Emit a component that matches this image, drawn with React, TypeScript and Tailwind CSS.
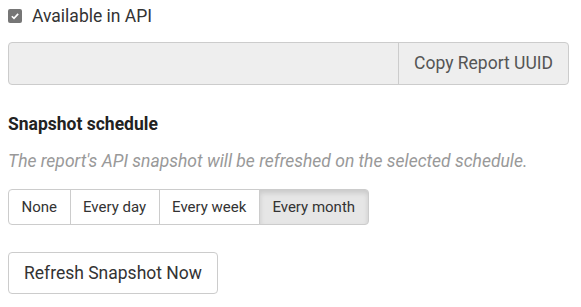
import { useState } from 'react';

const options = ['None', 'Every day', 'Every week', 'Every month'];

export default function App() {
  const [available, setAvailable] = useState(true);
  const [schedule, setSchedule] = useState('Every month');

  return (
    <div className="min-h-screen bg-white px-2 pt-[7px] text-[#333] font-['Roboto',sans-serif]">
      {/* API toggle */}
      <label className="flex h-[18px] items-center gap-[10px] text-[17.5px]">
        <button
          type="button"
          onClick={() => setAvailable(!available)}
          className="flex h-[14px] w-[14px] items-center justify-center rounded-[2px] bg-[#767676]"
        >
          {available && (
            <svg viewBox="0 0 12 12" className="h-[10px] w-[10px]">
              <path d="M2.2 6.3 L4.8 8.8 L9.8 3.4" fill="none" stroke="white" strokeWidth="2" />
            </svg>
          )}
        </button>
        <span>Available in API</span>
      </label>

      {/* UUID input group */}
      <div className="mt-[17px] flex h-[43px] w-[561px] overflow-hidden rounded-[4px] border border-[#ccc] bg-[#eee]">
        <input readOnly className="flex-1 bg-transparent px-3 outline-none" />
        <button type="button" className="border-l border-[#ccc] px-[15px] text-[17.5px] text-[#555]">
          Copy Report UUID
        </button>
      </div>

      {/* Schedule */}
      <h3 className="mt-[27px] text-[17.5px] font-bold leading-[24px] text-[#222]">Snapshot schedule</h3>
      <p className="mt-[13px] text-[17.5px] italic leading-[24px] text-[#999]">
        The report's API snapshot will be refreshed on the selected schedule.
      </p>

      <div className="mt-[16px] flex w-fit">
        {options.map((o, i) => {
          const active = schedule === o;
          return (
            <button
              key={o}
              type="button"
              onClick={() => setSchedule(o)}
              className={
                'h-[36px] border border-[#ccc] px-[12.5px] text-[15px] text-[#333] ' +
                (i > 0 ? '-ml-px ' : '') +
                (i === 0 ? 'rounded-l-[4px] ' : '') +
                (i === options.length - 1 ? 'rounded-r-[4px] ' : '') +
                (active ? 'border-[#adadad] bg-[#e6e6e6] shadow-[inset_0_3px_5px_rgba(0,0,0,0.125)]' : 'bg-white')
              }
            >
              {o}
            </button>
          );
        })}
      </div>

      <button
        type="button"
        className="mt-[27px] h-[42px] rounded-[4px] border border-[#ccc] bg-white px-[15px] text-[17.5px] text-[#333]"
      >
        Refresh Snapshot Now
      </button>
    </div>
  );
}
